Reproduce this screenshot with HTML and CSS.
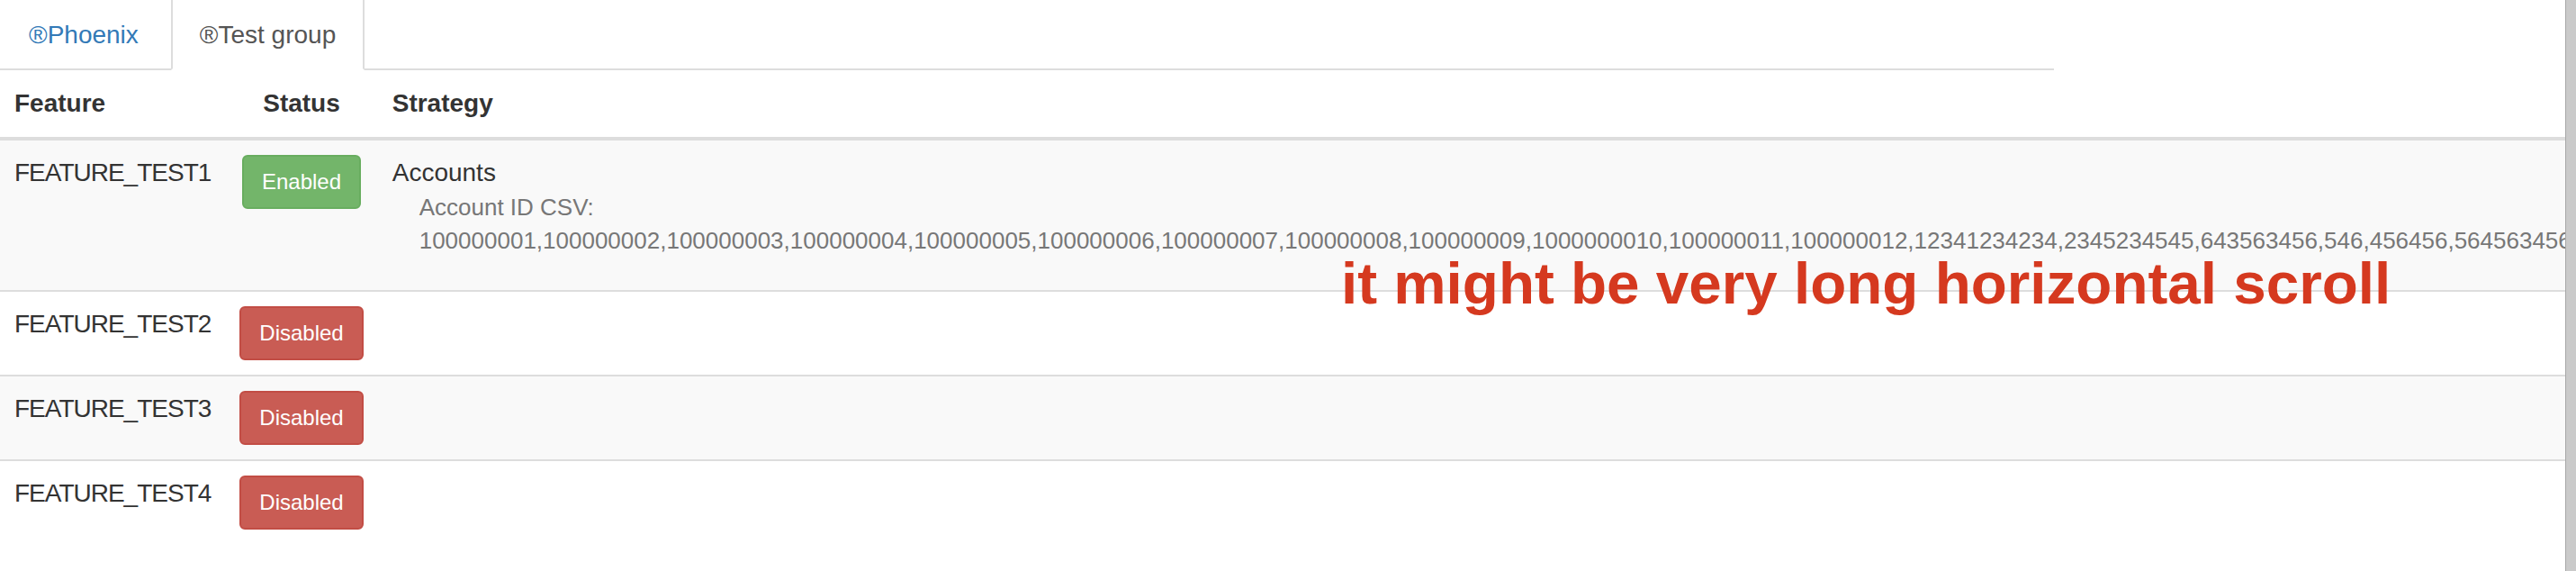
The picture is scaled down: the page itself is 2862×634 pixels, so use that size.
FILE: index.html
```html
<!DOCTYPE html>
<html lang="en">
<head>
<meta charset="utf-8">
<title>Features</title>
<link rel="stylesheet" href="styles.css">
</head>
<body>
<div class="page">
  <ul class="tabs">
    <li class="tab"><a class="tab-link">®Phoenix</a></li>
    <li class="tab active"><a class="tab-link">®Test group</a></li>
  </ul>
  <table class="features">
    <thead>
      <tr>
        <th class="col-feature">Feature</th>
        <th class="col-status">Status</th>
        <th class="col-strategy">Strategy</th>
      </tr>
    </thead>
    <tbody>
      <tr>
        <td class="feature">FEATURE_TEST1</td>
        <td class="status"><span class="btn btn-success">Enabled</span></td>
        <td class="strategy">
          <div class="strategy-name">Accounts</div>
          <ul class="params">
            <li class="param-label">Account ID CSV:</li>
            <li class="param-value">100000001,100000002,100000003,100000004,100000005,100000006,100000007,100000008,100000009,1000000010,100000011,100000012,12341234234,2345234545,643563456,546,456456,5645634563,456345634,5634563456,34563456</li>
          </ul>
        </td>
      </tr>
      <tr>
        <td class="feature">FEATURE_TEST2</td>
        <td class="status"><span class="btn btn-danger">Disabled</span></td>
        <td class="strategy"></td>
      </tr>
      <tr>
        <td class="feature">FEATURE_TEST3</td>
        <td class="status"><span class="btn btn-danger">Disabled</span></td>
        <td class="strategy"></td>
      </tr>
      <tr>
        <td class="feature">FEATURE_TEST4</td>
        <td class="status"><span class="btn btn-danger">Disabled</span></td>
        <td class="strategy"></td>
      </tr>
    </tbody>
  </table>
</div>
<div class="note">it might be very long horizontal scroll</div>
<div class="scrollbar"></div>
</body>
</html>
```

FILE: styles.css
```css
html, body {
  margin: 0;
  padding: 0;
  height: 100%;
  overflow: hidden;
}

body {
  font-family: "Liberation Sans", Arial, Helvetica, sans-serif;
  font-size: 28px;
  line-height: 40px;
  color: #333333;
  background: #ffffff;
}

.page {
  width: 2282px;
}

/* Tabs */
.tabs {
  display: flex;
  list-style: none;
  margin: 0;
  padding: 0;
  border-bottom: 2px solid #dddddd;
}

.tab {
  margin: 0 4px -2px 0;
}

.tab-link {
  display: block;
  padding: 19px 30px 17px;
  border: 2px solid transparent;
  border-top: 0;
  line-height: 40px;
  color: #337ab7;
  text-decoration: none;
}

.tab.active .tab-link {
  color: #555555;
  background: #ffffff;
  border-color: #dddddd;
  border-bottom-color: transparent;
}

/* Table */
.features {
  border-collapse: separate;
  border-spacing: 0;
}

.features th {
  font-weight: bold;
  text-align: left;
  padding: 17px 16px;
  line-height: 40px;
  border-bottom: 4px solid #dddddd;
  white-space: nowrap;
}

.features th.col-feature {
  width: 227px;
}

.features th.col-status {
  width: 137px;
  text-align: center;
}

.features td {
  padding: 16px;
  vertical-align: top;
  border-top: 2px solid #dddddd;
}

.features tbody tr:first-child td {
  border-top: 0;
}

.features tbody tr:nth-child(odd) td {
  background: #f9f9f9;
}

.features td.feature {
  letter-spacing: -1px;
  white-space: nowrap;
}

.features td.status {
  text-align: center;
}

.features td.strategy {
  white-space: nowrap;
}

.strategy-name {
  line-height: 40px;
}

.params {
  list-style: none;
  margin: 0 0 20px;
  padding: 0 0 0 30px;
  font-size: 26px;
  line-height: 37px;
  color: #777777;
}

/* Buttons */
.btn {
  display: inline-block;
  vertical-align: top;
  padding: 10px 20px;
  font-size: 24px;
  line-height: 36px;
  border: 2px solid transparent;
  border-radius: 6px;
  color: #ffffff;
  white-space: nowrap;
}

.btn-success {
  background: #73b56a;
  border-color: #68ad5f;
}

.btn-danger {
  background: #c95c54;
  border-color: #c24d45;
}

/* Annotation overlay */
.note {
  position: absolute;
  left: 1490px;
  top: 282px;
  font-size: 65.6px;
  line-height: 1;
  font-weight: bold;
  color: #d5391f;
  white-space: nowrap;
}

/* Window scrollbar */
.scrollbar {
  position: fixed;
  top: 0;
  right: 0;
  width: 11px;
  height: 100%;
  background: #cacaca;
  border-left: 1px solid #a8a8a8;
}
```
